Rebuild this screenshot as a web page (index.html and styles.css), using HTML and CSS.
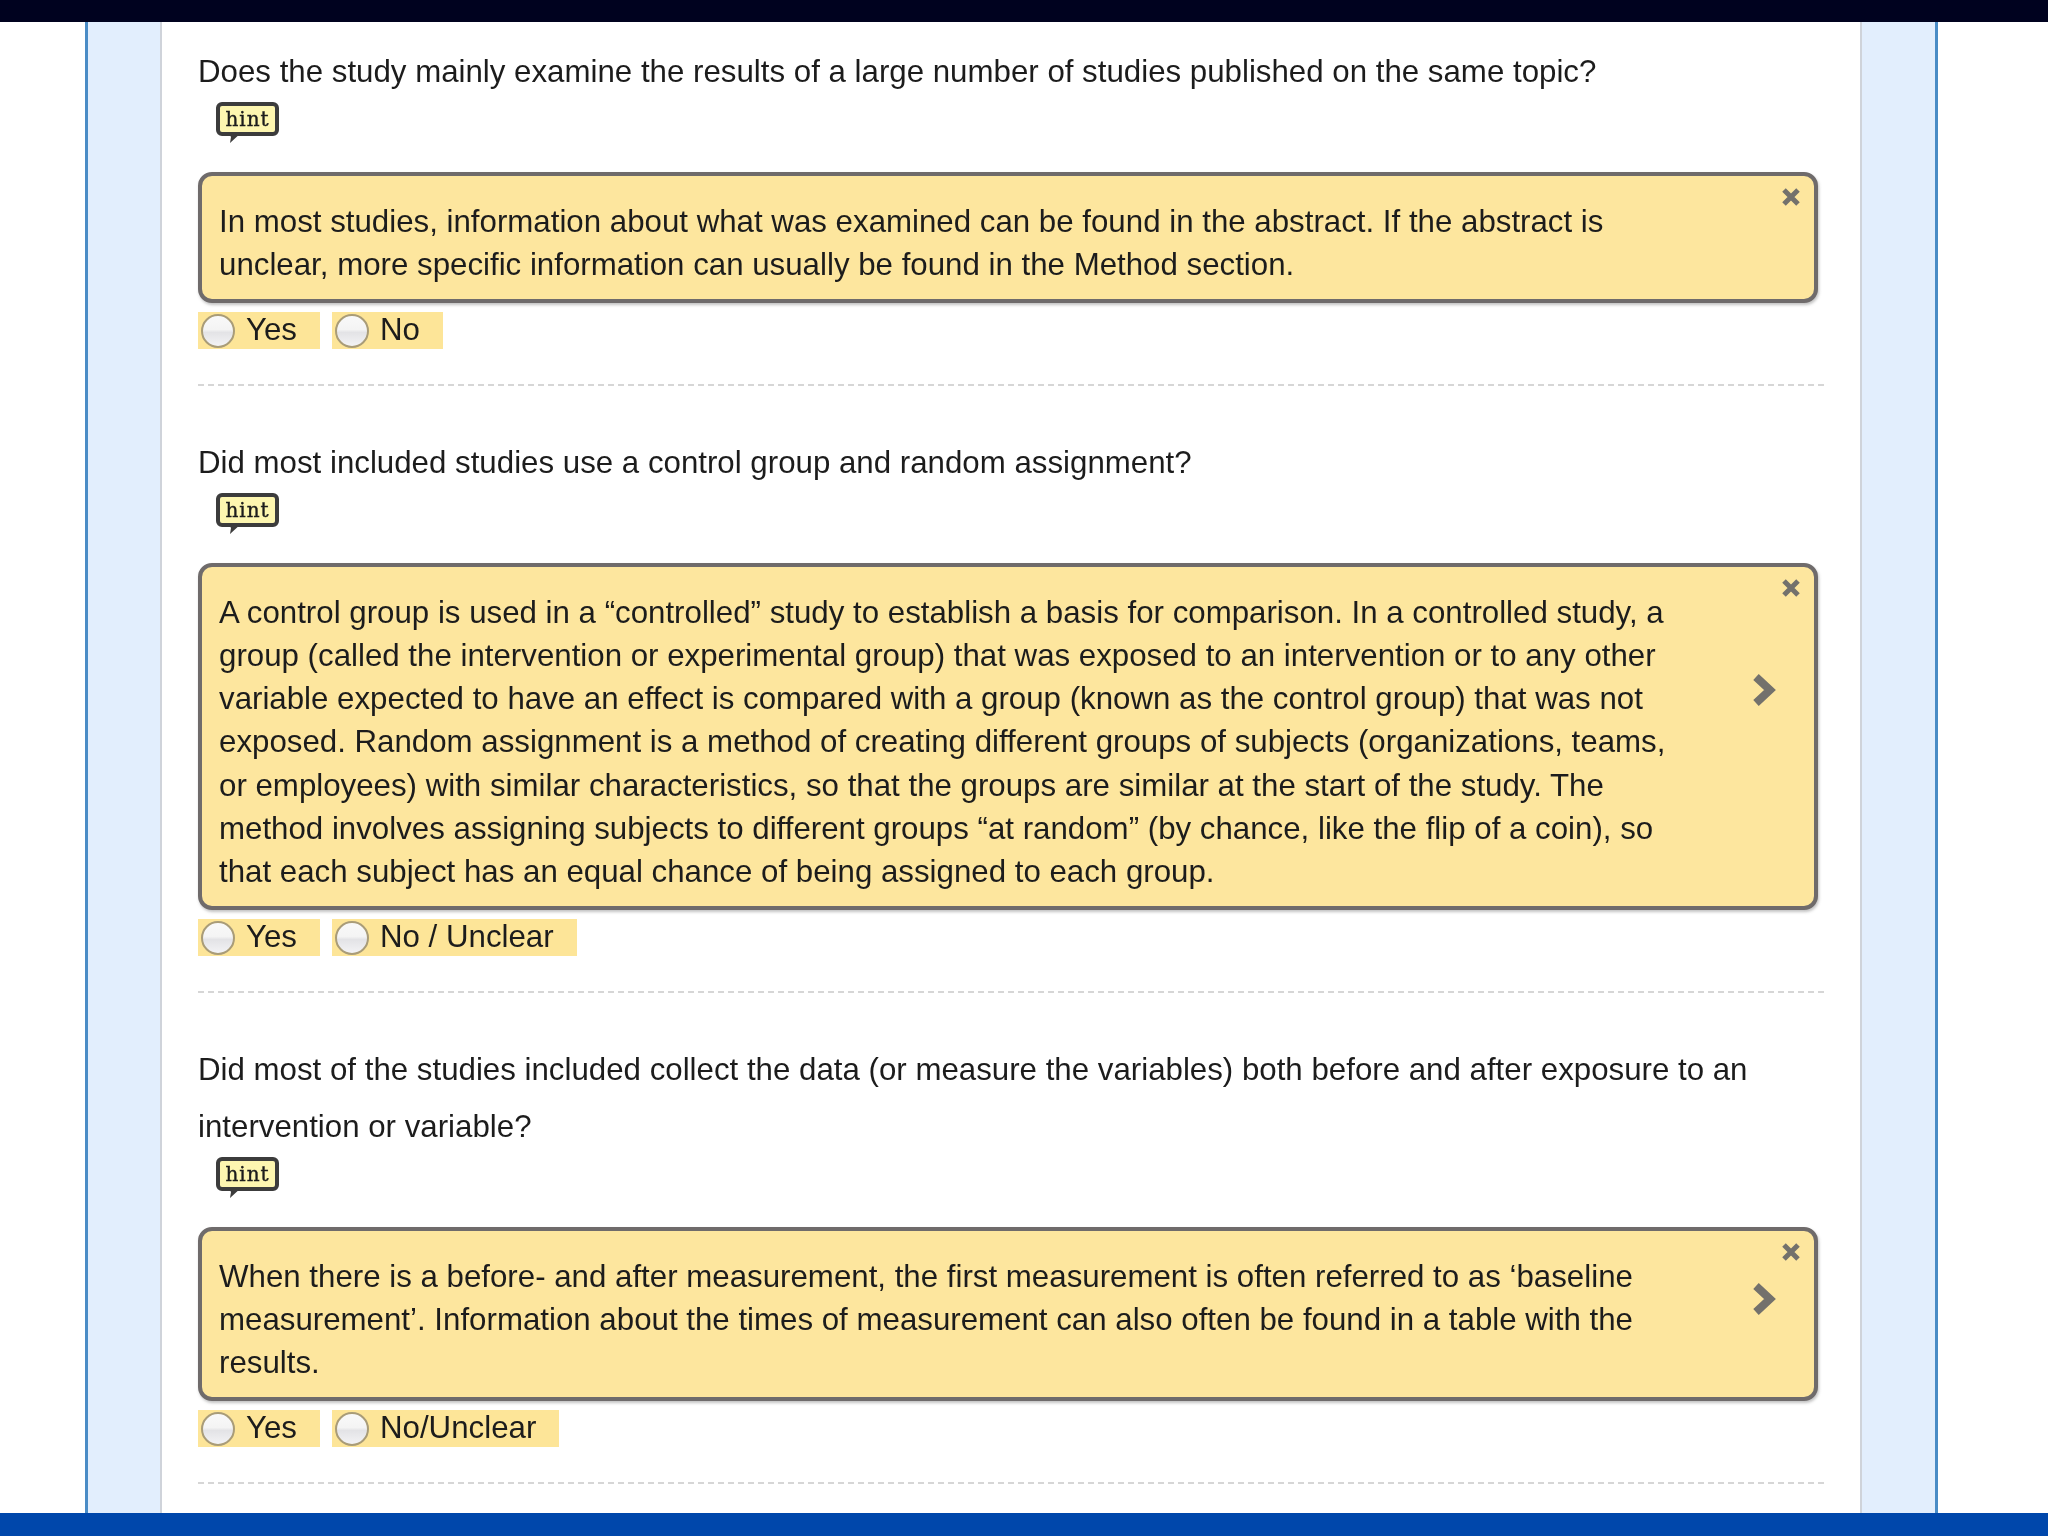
FILE: index.html
```html
<!DOCTYPE html>
<html lang="en">
<head>
<meta charset="utf-8">
<title>Study questions</title>
<link rel="stylesheet" href="styles.css">
</head>
<body>
<div class="page">
  <div class="topbar"></div>
  <main class="frame">
    <div class="sheet">

      <section class="item item-first">
        <p class="question">Does the study mainly examine the results of a large number of studies published on the same topic?</p>
        <div class="hint-row">
          <span class="hint"><span class="hint-label">hint</span><svg class="hint-tail" viewBox="0 0 16 12"><path d="M1 0 L15 0 L3 11 L4 5 Z"/></svg></span>
        </div>
        <div class="note">
          <svg class="close" viewBox="0 0 20 20"><path d="M3 3 L17 17 M17 3 L3 17"/></svg>
          <p class="note-text">In most studies, information about what was examined can be found in the abstract. If the abstract is unclear, more specific information can usually be found in the Method section.</p>
        </div>
        <div class="options">
          <label class="option"><span class="radio"></span>Yes</label>
          <label class="option"><span class="radio"></span>No</label>
        </div>
      </section>

      <section class="item">
        <p class="question">Did most included studies use a control group and random assignment?</p>
        <div class="hint-row">
          <span class="hint"><span class="hint-label">hint</span><svg class="hint-tail" viewBox="0 0 16 12"><path d="M1 0 L15 0 L3 11 L4 5 Z"/></svg></span>
        </div>
        <div class="note">
          <svg class="close" viewBox="0 0 20 20"><path d="M3 3 L17 17 M17 3 L3 17"/></svg>
          <svg class="chevron chevron-long" viewBox="0 0 24 34"><path d="M4 4 L18 17 L4 30"/></svg>
          <p class="note-text">A control group is used in a “controlled” study to establish a basis for comparison. In a controlled study, a group (called the intervention or experimental group) that was exposed to an intervention or to any other variable expected to have an effect is compared with a group (known as the control group) that was not exposed. Random assignment is a method of creating different groups of subjects (organizations, teams, or employees) with similar characteristics, so that the groups are similar at the start of the study. The method involves assigning subjects to different groups “at random” (by chance, like the flip of a coin), so that each subject has an equal chance of being assigned to each group.</p>
        </div>
        <div class="options">
          <label class="option"><span class="radio"></span>Yes</label>
          <label class="option"><span class="radio"></span>No / Unclear</label>
        </div>
      </section>

      <section class="item">
        <p class="question">Did most of the studies included collect the data (or measure the variables) both before and after exposure to an intervention or variable?</p>
        <div class="hint-row">
          <span class="hint"><span class="hint-label">hint</span><svg class="hint-tail" viewBox="0 0 16 12"><path d="M1 0 L15 0 L3 11 L4 5 Z"/></svg></span>
        </div>
        <div class="note">
          <svg class="close" viewBox="0 0 20 20"><path d="M3 3 L17 17 M17 3 L3 17"/></svg>
          <svg class="chevron chevron-short" viewBox="0 0 24 34"><path d="M4 4 L18 17 L4 30"/></svg>
          <p class="note-text">When there is a before- and after measurement, the first measurement is often referred to as ‘baseline measurement’. Information about the times of measurement can also often be found in a table with the results.</p>
        </div>
        <div class="options">
          <label class="option"><span class="radio"></span>Yes</label>
          <label class="option"><span class="radio"></span>No/Unclear</label>
        </div>
      </section>

    </div>
  </main>
  <div class="bottombar"></div>
</div>
</body>
</html>
```

FILE: styles.css
```css
* { box-sizing: border-box; }

html, body { margin: 0; padding: 0; background: #fff; }

.page {
  display: flex;
  flex-direction: column;
  width: 2048px;
  height: 1536px;
  overflow: hidden;
  font-family: "Liberation Sans", Arial, sans-serif;
  color: #1c1c1c;
}

.topbar { flex: 0 0 22px; background: #00021f; }
.bottombar { flex: 0 0 23px; background: #0047ab; }

.frame {
  flex: 1 1 auto;
  min-height: 0;
  width: 1853px;
  margin-left: 85px;
  padding: 0 73px 0 72px;
  background: #e2eefd;
  border-left: 3px solid #4a8cc6;
  border-right: 3px solid #4a8cc6;
  overflow: hidden;
}

.sheet {
  height: 100%;
  padding: 21px 36px 0 36px;
  background: #fff;
  border-left: 2px solid #cfd3da;
  border-right: 2px solid #cfd3da;
  filter: blur(0.45px);
}

.item {
  padding-bottom: 35px;
  margin-bottom: 48px;
  border-bottom: 2px dashed #d6d6d6;
}

.question {
  margin: 0;
  font-size: 31.25px;
  line-height: 57px;
}

.hint-row { height: 72px; padding: 2px 0 0 18px; }

.hint {
  position: relative;
  display: inline-flex;
  align-items: center;
  justify-content: center;
  width: 63px;
  height: 34px;
  background: #fdf6b0;
  border: 4px solid #3c3c3c;
  border-radius: 6px;
}

.hint-label {
  font-family: "DejaVu Serif", "Liberation Serif", serif;
  font-size: 20px;
  letter-spacing: 1px;
  line-height: 1;
  color: #1c1c1c;
  -webkit-text-stroke: 0.4px #1c1c1c;
}

.hint-tail {
  position: absolute;
  left: 7px;
  top: 26px;
  width: 16px;
  height: 12px;
  fill: #3c3c3c;
}

.note {
  position: relative;
  width: 1620px;
  padding: 24px 136px 12px 17px;
  background: #fde69e;
  border: 4px solid #6f6b6b;
  border-radius: 14px;
  box-shadow: 1px 2px 3px rgba(80, 80, 80, 0.35);
}

.note-text {
  margin: 0;
  font-size: 31.25px;
  line-height: 43.3px;
}

.close {
  position: absolute;
  top: 11px;
  right: 13px;
  width: 20px;
  height: 20px;
  fill: none;
  stroke: #73716c;
  stroke-width: 5;
}

.chevron {
  position: absolute;
  right: 38px;
  width: 24px;
  height: 34px;
  fill: none;
  stroke: #73716c;
  stroke-width: 8;
}

.chevron-long { top: 106px; }
.chevron-short { top: 51px; }

.options {
  display: flex;
  gap: 12px;
  margin-top: 9px;
}

.option {
  display: flex;
  align-items: center;
  gap: 11px;
  height: 37px;
  padding: 0 23px 0 3px;
  background: #fde598;
  font-size: 31.25px;
}

.radio {
  flex: 0 0 34px;
  width: 34px;
  height: 34px;
  margin-top: 2px;
  border: 2px solid #a99c78;
  border-radius: 50%;
  background: linear-gradient(#f9f9f9 0%, #f4f4f4 45%, #e3e3e6 55%, #f3f3f5 100%);
}
```
